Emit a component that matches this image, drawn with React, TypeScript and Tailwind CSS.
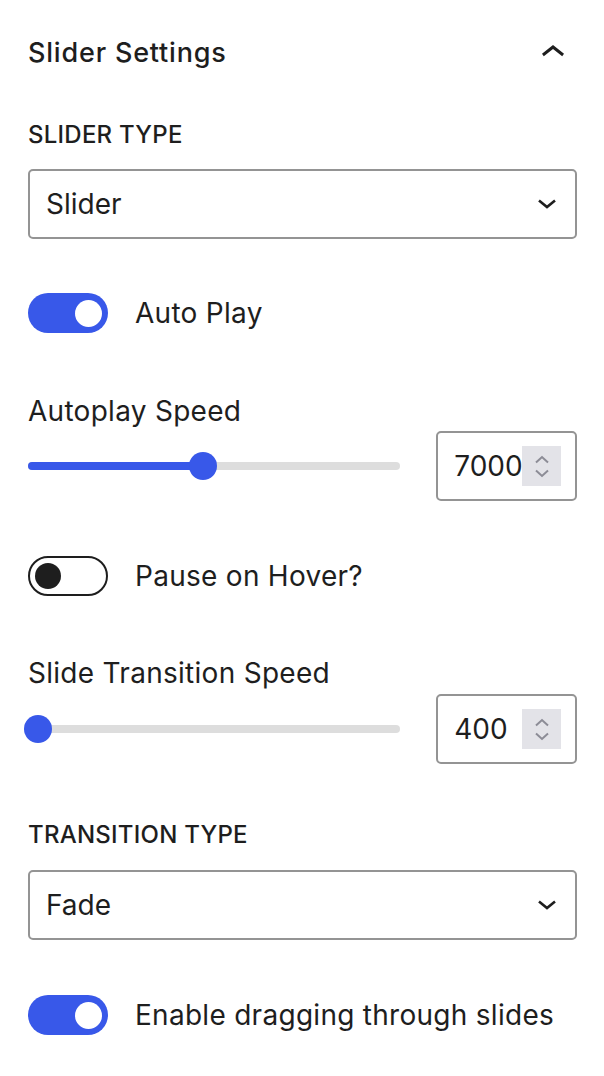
import React from 'react';

const font = { fontFamily: 'Inter, "Noto Sans", sans-serif' };

function Toggle({ on }: { on: boolean }) {
  return on ? (
    <div className="flex h-[40px] w-[80px] shrink-0 items-center justify-end rounded-full bg-[#3858e9] pr-[6px]">
      <div className="h-[27px] w-[27px] rounded-full bg-white" />
    </div>
  ) : (
    <div className="flex h-[40px] w-[80px] shrink-0 items-center rounded-full border-2 border-[#1e1e1e] bg-white pl-[5px]">
      <div className="h-[26px] w-[26px] rounded-full bg-[#1e1e1e]" />
    </div>
  );
}

function ToggleRow({ on, label }: { on: boolean; label: string }) {
  return (
    <div className="flex items-center gap-[27px]">
      <Toggle on={on} />
      <span className="text-[28px] leading-[34px] tracking-[0.01em] text-[#1e1e1e]">{label}</span>
    </div>
  );
}

function ChevronDown() {
  return (
    <svg width="20" height="12" viewBox="0 0 20 12" fill="none">
      <path d="M2 2.5l8 6.5 8-6.5" stroke="#1e1e1e" strokeWidth="2.6" />
    </svg>
  );
}

function Select({ value }: { value: string }) {
  return (
    <div className="flex h-[70px] items-center justify-between rounded-[5px] border-2 border-[#949494] pl-[16px] pr-[18px]">
      <span className="text-[28px] leading-[34px] text-[#1e1e1e]">{value}</span>
      <ChevronDown />
    </div>
  );
}

function RangeRow({ percent, value }: { percent: number; value: string }) {
  return (
    <div className="flex items-center gap-[36px]">
      <div className="relative h-[30px] w-[373px]">
        <div className="absolute left-0 right-0 top-[11px] h-[8px] rounded-full bg-[#dddddd]" />
        <div
          className="absolute left-0 top-[11px] h-[8px] rounded-full bg-[#3858e9]"
          style={{ width: `${percent}%` }}
        />
        <div
          className="absolute top-[1px] h-[28px] w-[28px] -translate-x-1/2 rounded-full bg-[#3858e9]"
          style={{ left: `calc(${percent}% + ${percent === 0 ? 10 : 0}px)` }}
        />
      </div>
      <div className="flex h-[70px] w-[141px] items-center rounded-[5px] border-2 border-[#949494] pl-[16px]">
        <span className="w-[68px] overflow-hidden whitespace-nowrap text-[28px] leading-[34px] text-[#1e1e1e]">{value}</span>
        <div className="flex h-[40px] w-[39px] flex-col items-center justify-center gap-[5px] bg-[#e3e3e8]">
          <svg width="16" height="9" viewBox="0 0 16 9" fill="none">
            <path d="M2 7.5l6-5.5 6 5.5" stroke="#8c8c96" strokeWidth="2" />
          </svg>
          <svg width="16" height="9" viewBox="0 0 16 9" fill="none">
            <path d="M2 1.5l6 5.5 6-5.5" stroke="#8c8c96" strokeWidth="2" />
          </svg>
        </div>
      </div>
    </div>
  );
}

export default function App() {
  return (
    <div className="min-h-screen bg-white pl-[28px] pr-[27px] pt-[29px]" style={font}>
      <div className="flex h-[48px] items-center justify-between">
        <h2 className="text-[27px] font-medium leading-[32px] tracking-[0.03em] text-[#1e1e1e]">Slider Settings</h2>
        <svg width="48" height="48" viewBox="0 0 24 24">
          <path d="M6.5 12.4L12 8l5.5 4.4-.9 1.2L12 10l-4.6 3.6-.9-1.2z" fill="#1e1e1e" />
        </svg>
      </div>

      <div className="mt-[44px] text-[24px] font-medium uppercase leading-[28px] tracking-[0.01em] text-[#1e1e1e]">Slider Type</div>
      <div className="mt-[20px]">
        <Select value="Slider" />
      </div>

      <div className="mt-[54px]">
        <ToggleRow on label="Auto Play" />
      </div>

      <div className="mt-[61px] text-[28px] leading-[34px] tracking-[0.01em] text-[#1e1e1e]">Autoplay Speed</div>
      <div className="mt-[3px]">
        <RangeRow percent={47} value="7000" />
      </div>

      <div className="mt-[55px]">
        <ToggleRow on={false} label="Pause on Hover?" />
      </div>

      <div className="mt-[60px] text-[28px] leading-[34px] tracking-[0.01em] text-[#1e1e1e]">Slide Transition Speed</div>
      <div className="mt-[4px]">
        <RangeRow percent={0} value="400" />
      </div>

      <div className="mt-[57px] text-[24px] font-medium uppercase leading-[28px] tracking-[0.01em] text-[#1e1e1e]">Transition Type</div>
      <div className="mt-[21px]">
        <Select value="Fade" />
      </div>

      <div className="mt-[55px]">
        <ToggleRow on label="Enable dragging through slides" />
      </div>
    </div>
  );
}
